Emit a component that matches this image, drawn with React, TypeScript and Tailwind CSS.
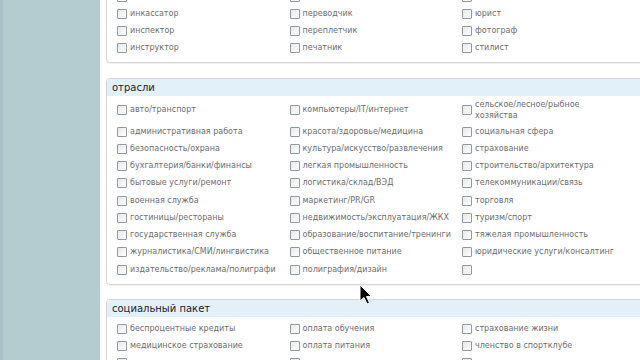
import React from "react";

type Row = string[];

const topRows: Row[] = [
  ["", "", ""],
  ["инкассатор", "переводчик", "юрист"],
  ["инспектор", "переплетчик", "фотограф"],
  ["инструктор", "печатник", "стилист"],
];

const industryRows: Row[] = [
  ["административная работа", "красота/здоровье/медицина", "социальная сфера"],
  ["безопасность/охрана", "культура/искусство/развлечения", "страхование"],
  ["бухгалтерия/банки/финансы", "легкая промышленность", "строительство/архитектура"],
  ["бытовые услуги/ремонт", "логистика/склад/ВЭД", "телекоммуникации/связь"],
  ["военная служба", "маркетинг/PR/GR", "торговля"],
  ["гостиницы/рестораны", "недвижимость/эксплуатация/ЖКХ", "туризм/спорт"],
  ["государственная служба", "образование/воспитание/тренинги", "тяжелая промышленность"],
  ["журналистика/СМИ/лингвистика", "общественное питание", "юридические услуги/консалтинг"],
  ["издательство/реклама/полиграфи", "полиграфия/дизайн", ""],
];

const socialRows: Row[] = [
  ["беспроцентные кредиты", "оплата обучения", "страхование жизни"],
  ["медицинское страхование", "оплата питания", "членство в спортклубе"],
  ["", "", ""],
];

const Box: React.FC = () => (
  <span className="w-[10px] h-[10px] shrink-0 border border-[#8f9aa2] rounded-[1px] bg-gradient-to-br from-[#e6e8ea] to-white" />
);

const Item: React.FC<{ label: string }> = ({ label }) => (
  <div className="flex items-center w-[172.5px] overflow-hidden">
    <Box />
    {label && (
      <span className="ml-[3px] whitespace-nowrap text-[8px] text-[#6d6d6d]">{label}</span>
    )}
  </div>
);

const Rows: React.FC<{ rows: Row[]; h: string }> = ({ rows, h }) => (
  <>
    {rows.map((r, i) => (
      <div key={i} className={`flex items-center ${h}`}>
        {r.map((t, j) => (
          <Item key={j} label={t} />
        ))}
      </div>
    ))}
  </>
);

const Header: React.FC<{ title: string }> = ({ title }) => (
  <div className="h-[17px] bg-[#e2f0fa] rounded-tl-[4px] flex items-center pl-[5px] text-[10px] text-[#222]">
    {title}
  </div>
);

export default function App() {
  return (
    <div
      className="relative w-[640px] h-[360px] overflow-hidden flex bg-white"
      style={{ fontFamily: '"DejaVu Sans", Verdana, sans-serif' }}
    >
      <div className="w-[100px] shrink-0 bg-[#b4cbd0] border-l-[3px] border-[#aac2c7]" />
      <div className="flex-1 pl-[6px]">
        <div className="-mt-[13px] -mr-[20px] border border-[#d6d6d6] rounded-[4px] shadow-[0_1px_1px_rgba(0,0,0,0.06)] pl-[10px] pb-[6px]">
          <Rows rows={topRows} h="h-[17px]" />
        </div>

        <div className="mt-[15px] -mr-[20px] border border-[#d6d6d6] rounded-[4px] shadow-[0_1px_1px_rgba(0,0,0,0.06)] pb-[6px]">
          <Header title="отрасли" />
          <div className="pl-[10px]">
            <div className="flex items-center h-[27px]">
              <Item label="авто/транспорт" />
              <Item label="компьютеры/IT/интернет" />
              <div className="flex items-center w-[172.5px]">
                <Box />
                <span className="ml-[3px] text-[8px] leading-[11px] text-[#6d6d6d]">
                  сельское/лесное/рыбное
                  <br />
                  хозяйства
                </span>
              </div>
            </div>
            <Rows rows={industryRows} h="h-[17.25px]" />
          </div>
        </div>

        <div className="mt-[14px] -mr-[20px] border border-[#d6d6d6] rounded-[4px] pb-[6px]">
          <Header title="социальный пакет" />
          <div className="pl-[10px] pt-[3px]">
            <Rows rows={socialRows} h="h-[17.25px]" />
          </div>
        </div>
      </div>

      <svg
        className="absolute left-[359px] top-[284px]"
        width="14"
        height="22"
        viewBox="0 0 14 22"
      >
        <path
          d="M1 1 L1 17 L5 13.5 L8 20 L10.5 19 L7.5 12.5 L12.5 12.5 Z"
          fill="#000"
          stroke="#fff"
          strokeWidth="1"
          strokeLinejoin="round"
        />
      </svg>
    </div>
  );
}
